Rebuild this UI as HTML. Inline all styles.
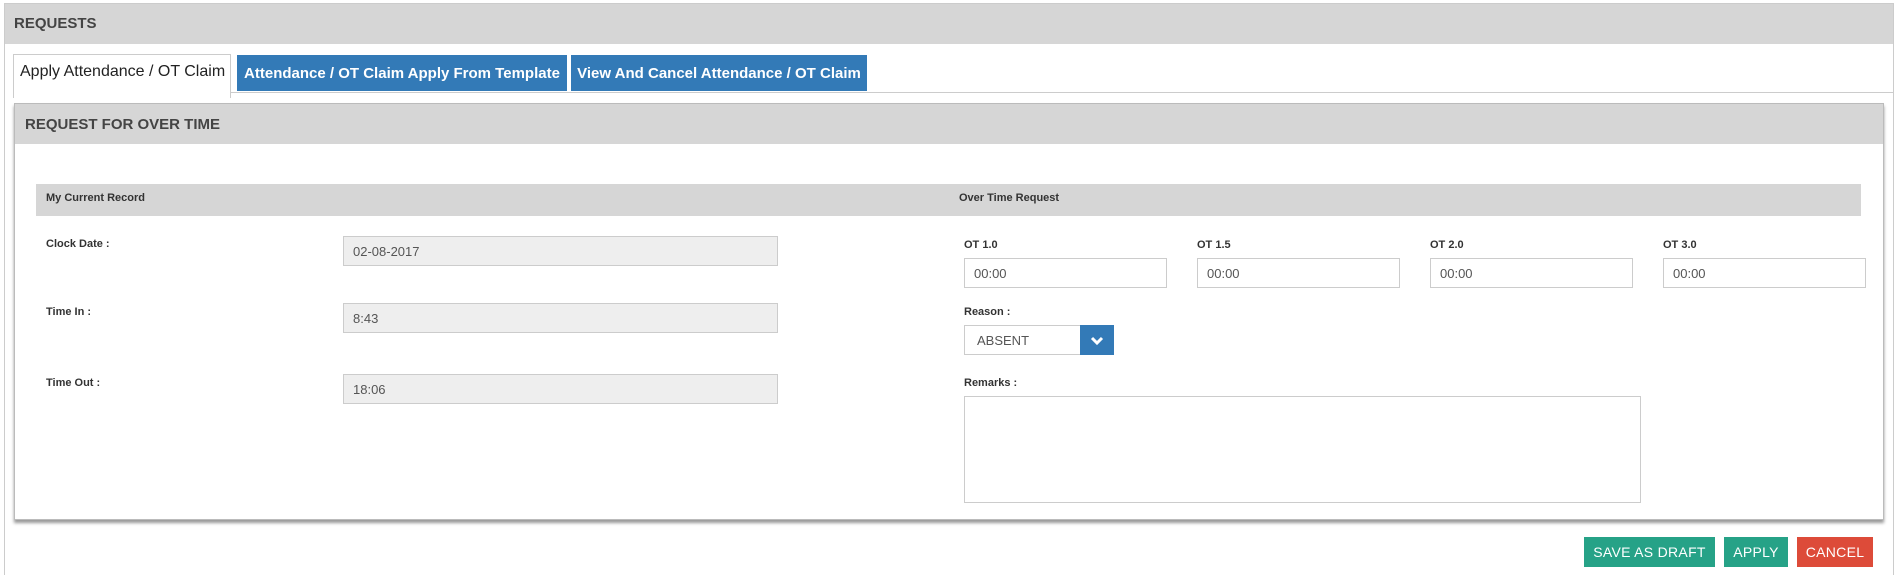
<!DOCTYPE html>
<html style="height:575px;overflow:hidden"><head><style>
*{box-sizing:border-box;margin:0;padding:0}
body{width:1898px;height:575px;background:#fff;font-family:"Liberation Sans",sans-serif;position:relative;overflow:hidden;color:#333}
.a{position:absolute}
.lbl{position:absolute;font-size:11px;font-weight:bold;color:#333}
.inp{position:absolute;border:1px solid #ccc;background:#fff;font-size:13px;color:#555;padding-left:9px;display:flex;align-items:center}
.ro{background:#eee}
.btn{position:absolute;top:537px;height:30px;color:#fff;font-size:14px;display:flex;align-items:center;justify-content:center;letter-spacing:.3px}
</style></head><body>
<div class="a" style="left:4px;top:3px;width:1890px;height:580px;border:1px solid #ccc"></div>
<div class="a" style="left:5px;top:4px;width:1888px;height:40px;background:#d6d6d6"></div>
<div class="a" style="left:14px;top:15px;font-size:15px;font-weight:bold;color:#444">REQUESTS</div>

<div class="a" style="left:231px;top:92px;width:1662px;height:1px;background:#ccc"></div>
<div class="a" style="left:13px;top:54px;width:218px;height:44px;border:1px solid #ccc;border-bottom:none;background:#fff"></div>
<div class="a" style="left:20px;top:63px;font-size:16px;color:#222">Apply Attendance / OT Claim</div>
<div class="a" style="left:237px;top:55px;width:330px;height:36px;background:#337ab7;color:#fff;font-size:15px;font-weight:bold;display:flex;align-items:center;justify-content:center">Attendance / OT Claim Apply From Template</div>
<div class="a" style="left:571px;top:55px;width:296px;height:36px;background:#337ab7;color:#fff;font-size:15px;font-weight:bold;display:flex;align-items:center;justify-content:center">View And Cancel Attendance / OT Claim</div>

<div class="a" style="left:14px;top:103px;width:1870px;height:417px;border:1px solid #bbb;box-shadow:0 3px 3px #999;background:#fff"></div>
<div class="a" style="left:15px;top:104px;width:1868px;height:40px;background:#d6d6d6"></div>
<div class="a" style="left:25px;top:116px;font-size:15px;font-weight:bold;color:#444">REQUEST FOR OVER TIME</div>

<div class="a" style="left:36px;top:184px;width:1825px;height:32px;background:#d6d6d6"></div>
<div class="lbl" style="left:46px;top:192px">My Current Record</div>
<div class="lbl" style="left:959px;top:192px">Over Time Request</div>

<div class="lbl" style="left:46px;top:238px">Clock Date :</div>
<div class="inp ro" style="left:343px;top:236px;width:435px;height:30px">02-08-2017</div>
<div class="lbl" style="left:46px;top:306px">Time In :</div>
<div class="inp ro" style="left:343px;top:303px;width:435px;height:30px">8:43</div>
<div class="lbl" style="left:46px;top:377px">Time Out :</div>
<div class="inp ro" style="left:343px;top:374px;width:435px;height:30px">18:06</div>

<div class="lbl" style="left:964px;top:239px">OT 1.0</div>
<div class="lbl" style="left:1197px;top:239px">OT 1.5</div>
<div class="lbl" style="left:1430px;top:239px">OT 2.0</div>
<div class="lbl" style="left:1663px;top:239px">OT 3.0</div>
<div class="inp" style="left:964px;top:258px;width:203px;height:30px">00:00</div>
<div class="inp" style="left:1197px;top:258px;width:203px;height:30px">00:00</div>
<div class="inp" style="left:1430px;top:258px;width:203px;height:30px">00:00</div>
<div class="inp" style="left:1663px;top:258px;width:203px;height:30px">00:00</div>

<div class="lbl" style="left:964px;top:306px">Reason :</div>
<div class="inp" style="left:964px;top:325px;width:120px;height:30px;padding-left:12px">ABSENT</div>
<div class="a" style="left:1080px;top:325px;width:34px;height:30px;background:#337ab7"><svg width="34" height="30"><path d="M12 13 L17 18 L22 13" stroke="#fff" stroke-width="3" fill="none"/></svg></div>

<div class="lbl" style="left:964px;top:377px">Remarks :</div>
<div class="inp" style="left:964px;top:396px;width:677px;height:107px"></div>

<div class="btn" style="left:1584px;width:131px;background:#26a287">SAVE AS DRAFT</div>
<div class="btn" style="left:1724px;width:64px;background:#26a287">APPLY</div>
<div class="btn" style="left:1797px;width:76px;background:#dd4b39">CANCEL</div>
</body></html>
